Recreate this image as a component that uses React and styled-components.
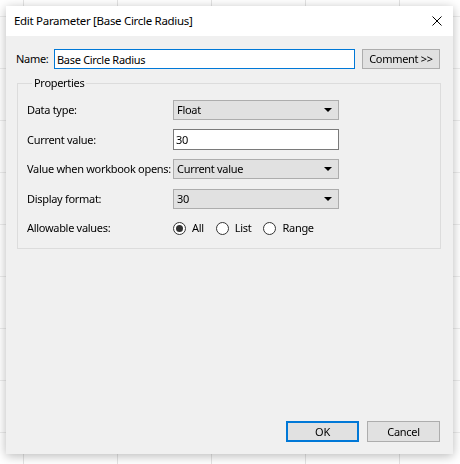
import React, { useState } from "react";
import styled, { createGlobalStyle } from "styled-components";

const GlobalStyle = createGlobalStyle`
  html, body {
    margin: 0;
    padding: 0;
  }
  body {
    width: 460px;
    height: 464px;
    overflow: hidden;
    font-family: "Segoe UI", "Noto Sans", "Liberation Sans", sans-serif;
    font-size: 11px;
    line-height: 14px;
    letter-spacing: -0.3px;
    color: #000;
    background-color: #fff;
    background-image:
      linear-gradient(to right, #e4e4e4 1px, transparent 1px),
      linear-gradient(to bottom, #ececec 1px, transparent 1px);
    background-size: 94px 100%, 100% 52px;
    background-position: 23px 0, 0 16px;
  }
`;

const Page = styled.div`
  padding: 6px 0 0 6px;
`;

const Dialog = styled.div`
  width: 447px;
  height: 448px;
  background: #f0f0f0;
  display: flex;
  flex-direction: column;
  box-shadow: 0 2px 10px rgba(0, 0, 0, 0.28);
`;

const TitleBar = styled.div`
  height: 30px;
  background: #fff;
  display: flex;
  align-items: center;
  justify-content: space-between;
  padding: 0 11px 0 8px;
  font-size: 11.5px;
`;

const CloseButton = styled.button`
  border: none;
  background: transparent;
  padding: 0;
  width: 10px;
  height: 10px;
  display: flex;
`;

const Body = styled.div`
  flex: 1;
  display: flex;
  flex-direction: column;
  padding: 13px 13px 12px 10px;
`;

const NameRow = styled.div`
  display: flex;
  align-items: center;
`;

const NameLabel = styled.label`
  width: 38px;
`;

const TextBox = styled.input`
  box-sizing: border-box;
  height: ${(p) => (p.$tall ? 21 : 20)}px;
  width: ${(p) => p.$width}px;
  border: 1px solid ${(p) => (p.$focused ? "#0078d7" : "#7a7a7a")};
  background: #fff;
  font: inherit;
  letter-spacing: inherit;
  padding: 0 2px;
  outline: none;
  color: #000;
  caret-color: #000;
`;

const PushButton = styled.button`
  box-sizing: border-box;
  height: ${(p) => (p.$height || 20)}px;
  width: ${(p) => p.$width}px;
  background: #e1e1e1;
  border: ${(p) => (p.$default ? "2px solid #0078d7" : "1px solid #adadad")};
  font: inherit;
  letter-spacing: inherit;
  color: #000;
  padding: 0;
`;

const GroupBox = styled.fieldset`
  margin: 7px 0 0 1px;
  border: 1px solid #dcdcdc;
  padding: 10px 10px 10px 9px;
  width: 424px;
  box-sizing: border-box;
`;

const Legend = styled.legend`
  padding: 0 2px;
  margin-left: 5px;
  line-height: 14px;
`;

const FieldGrid = styled.div`
  display: grid;
  grid-template-columns: 146px 166px;
  grid-auto-rows: 20px;
  row-gap: 9.5px;
  align-items: center;
`;

const FieldLabel = styled.span`
  white-space: nowrap;
`;

const Select = styled.div`
  box-sizing: border-box;
  height: 20px;
  border: 1px solid #adadad;
  background: #e1e1e1;
  display: flex;
  align-items: center;
  justify-content: space-between;
  padding: 0 6px 0 3px;
`;

const Caret = styled.span`
  width: 0;
  height: 0;
  border-left: 4px solid transparent;
  border-right: 4px solid transparent;
  border-top: 4px solid #000;
`;

const RadioGroup = styled.div`
  display: flex;
  align-items: center;
  gap: 12px;
`;

const RadioOption = styled.label`
  display: flex;
  align-items: center;
  gap: 6px;
`;

const RadioCircle = styled.span`
  box-sizing: border-box;
  width: 13px;
  height: 13px;
  border-radius: 50%;
  border: 1px solid #333;
  background: #fff;
  display: flex;
  align-items: center;
  justify-content: center;
  &::after {
    content: "";
    width: 7px;
    height: 7px;
    border-radius: 50%;
    background: ${(p) => (p.$checked ? "#333" : "transparent")};
  }
`;

const Footer = styled.div`
  margin-top: auto;
  display: flex;
  justify-content: flex-end;
  gap: 8px;
`;

function Dropdown({ value }) {
  return (
    <Select>
      <span>{value}</span>
      <Caret />
    </Select>
  );
}

export default function App() {
  const [name, setName] = useState("Base Circle Radius");
  const [current, setCurrent] = useState("30");
  const [allow, setAllow] = useState("All");

  return (
    <>
      <GlobalStyle />
      <Page>
        <Dialog>
          <TitleBar>
            <span>Edit Parameter [Base Circle Radius]</span>
            <CloseButton aria-label="Close">
              <svg width="10" height="10" viewBox="0 0 10 10">
                <path d="M0.5 0.5 L9.5 9.5 M9.5 0.5 L0.5 9.5" stroke="#000" strokeWidth="1" />
              </svg>
            </CloseButton>
          </TitleBar>
          <Body>
            <NameRow>
              <NameLabel>Name:</NameLabel>
              <TextBox
                $focused
                $width={301}
                value={name}
                onChange={(e) => setName(e.target.value)}
                autoFocus
              />
              <PushButton $width={78} style={{ marginLeft: 7 }}>
                Comment &gt;&gt;
              </PushButton>
            </NameRow>

            <GroupBox>
              <Legend>Properties</Legend>
              <FieldGrid>
                <FieldLabel>Data type:</FieldLabel>
                <Dropdown value="Float" />

                <FieldLabel>Current value:</FieldLabel>
                <TextBox
                  $tall
                  $width={166}
                  value={current}
                  onChange={(e) => setCurrent(e.target.value)}
                />

                <FieldLabel>Value when workbook opens:</FieldLabel>
                <Dropdown value="Current value" />

                <FieldLabel>Display format:</FieldLabel>
                <Dropdown value="30" />

                <FieldLabel>Allowable values:</FieldLabel>
                <RadioGroup>
                  {["All", "List", "Range"].map((opt) => (
                    <RadioOption key={opt} onClick={() => setAllow(opt)}>
                      <RadioCircle $checked={allow === opt} />
                      {opt}
                    </RadioOption>
                  ))}
                </RadioGroup>
              </FieldGrid>
            </GroupBox>

            <Footer>
              <PushButton $default $width={73} $height={21}>
                OK
              </PushButton>
              <PushButton $width={73} $height={21}>
                Cancel
              </PushButton>
            </Footer>
          </Body>
        </Dialog>
      </Page>
    </>
  );
}
